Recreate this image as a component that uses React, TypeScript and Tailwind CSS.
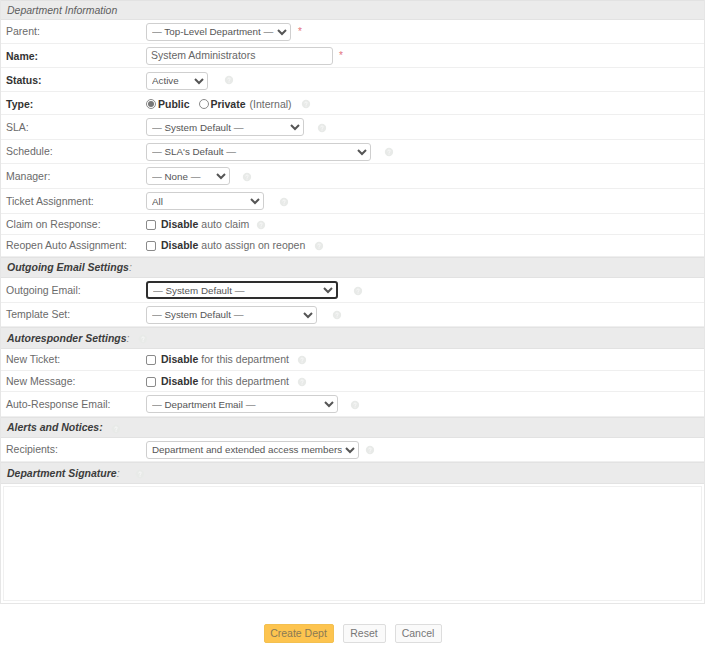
import { ReactNode } from "react";

function Help({ className = "" }: { className?: string }) {
  return (
    <svg
      viewBox="0 0 12 12"
      className={`w-[10px] h-[10px] shrink-0 mt-[1px] ${className}`}
      fill="none"
    >
      <circle cx="6" cy="6" r="5" fill="#e8eae8" />
      <path
        d="M4.6 4.8a1.4 1.4 0 1 1 2 1.3c-.4.2-.6.5-.6.9M6 8.6v.2"
        stroke="#fafafa"
        strokeWidth="1"
        strokeLinecap="round"
      />
    </svg>
  );
}

function Section({
  title,
  h,
  help,
  plain,
  bold,
}: {
  title: string;
  h: string;
  help?: string;
  plain?: boolean;
  bold?: string;
}) {
  return (
    <div
      className={`${h} flex items-center pl-[6px] pt-[1px] bg-[#ebebeb] border-y border-[#e2e2e2] text-[10.5px] italic text-[#3c3c3c] shrink-0`}
    >
      {plain ? (
        <span className="text-[#5e5e5e]">{title}</span>
      ) : (
        <span className="font-bold">
          {title}
          <span className="font-normal text-[#888888]">{bold}</span>
        </span>
      )}
      {help && <Help className={help} />}
    </div>
  );
}

function Row({
  label,
  strong,
  h,
  children,
}: {
  label: string;
  strong?: boolean;
  h: string;
  children: ReactNode;
}) {
  return (
    <div className={`${h} flex items-center border-b border-[#efefef] shrink-0`}>
      <div
        className={`w-[145px] pl-[5px] shrink-0 ${
          strong
            ? "pt-[3px] font-bold text-[#333333]"
            : "pt-[1px] text-[#6a6a6a]"
        }`}
      >
        {label}
      </div>
      {children}
    </div>
  );
}

function Select({
  value,
  width,
  focus,
}: {
  value: string;
  width: string;
  focus?: boolean;
}) {
  return (
    <select
      defaultValue={value}
      className={`${width} h-[18px] pl-[1px] text-[9.8px] text-[#555555] bg-white rounded-[3px] shrink-0 ${
        focus ? "border-2 border-[#2e2e2e]" : "border border-[#cfcfcf]"
      }`}
    >
      <option>{value}</option>
    </select>
  );
}

function Check({ bold, rest }: { bold: string; rest: string }) {
  return (
    <div className="flex items-center pt-[1px] text-[#6a6a6a]">
      <span className="w-[10px] h-[10px] rounded-[2px] border border-[#8a8a8a] bg-white mr-[5px] shrink-0" />
      <span className="font-bold text-[#333333]">{bold}</span>
      <span className="ml-[3px]">{rest}</span>
    </div>
  );
}

function Star({ className }: { className: string }) {
  return <span className={`text-[#e2727c] text-[10px] ${className}`}>*</span>;
}

export default function App() {
  return (
    <div
      className="w-[708px] h-[663px] bg-white text-[10.5px] overflow-hidden"
      style={{ fontFamily: '"Liberation Sans", Arial, sans-serif' }}
    >
      <div className="w-[705px] h-[604px] flex flex-col border-x border-b border-[#e6e6e6]">
        <Section title="Department Information" h="h-[20px]" plain />
        <Row label="Parent:" h="h-[24px]">
          <Select value="— Top-Level Department —" width="w-[145px]" />
          <Star className="ml-[7px]" />
        </Row>
        <Row label="Name:" strong h="h-[24px]">
          <div className="w-[187px] h-[18px] flex items-center pl-[4px] pt-[1px] border border-[#cfcfcf] rounded-[3px] text-[#666666] shrink-0">
            System Administrators
          </div>
          <Star className="ml-[6px]" />
        </Row>
        <Row label="Status:" strong h="h-[24px]">
          <Select value="Active" width="w-[62px] mt-[2px]" />
          <Help className="ml-[16px]" />
        </Row>
        <Row label="Type:" strong h="h-[23px]">
          <span className="w-[10px] h-[10px] mt-[1px] rounded-full border border-[#8a8a8a] flex items-center justify-center shrink-0">
            <span className="w-[6px] h-[6px] rounded-full bg-[#777777]" />
          </span>
          <span className="font-bold text-[#333333] ml-[2px] pt-[3px]">Public</span>
          <span className="w-[10px] h-[10px] mt-[1px] rounded-full border border-[#8a8a8a] ml-[9px] shrink-0" />
          <span className="font-bold text-[#333333] ml-[2px] pt-[3px]">Private</span>
          <span className="ml-[4px] pt-[3px] text-[#6a6a6a]">(Internal)</span>
          <Help className="ml-[9px]" />
        </Row>
        <Row label="SLA:" h="h-[25px]">
          <Select value="— System Default —" width="w-[158px]" />
          <Help className="ml-[13px]" />
        </Row>
        <Row label="Schedule:" h="h-[24px]">
          <Select value="— SLA's Default —" width="w-[225px]" />
          <Help className="ml-[13px]" />
        </Row>
        <Row label="Manager:" h="h-[25px]">
          <Select value="— None —" width="w-[84px]" />
          <Help className="ml-[12px]" />
        </Row>
        <Row label="Ticket Assignment:" h="h-[25px]">
          <Select value="All" width="w-[118px]" />
          <Help className="ml-[15px]" />
        </Row>
        <Row label="Claim on Response:" h="h-[21px]">
          <Check bold="Disable" rest="auto claim" />
          <Help className="ml-[7px]" />
        </Row>
        <Row label="Reopen Auto Assignment:" h="h-[22px]">
          <Check bold="Disable" rest="auto assign on reopen" />
          <Help className="ml-[9px]" />
        </Row>
        <Section title="Outgoing Email Settings" bold=":" h="h-[21px]" />
        <Row label="Outgoing Email:" h="h-[25px]">
          <Select value="— System Default —" width="w-[192px]" focus />
          <Help className="ml-[15px]" />
        </Row>
        <Row label="Template Set:" h="h-[24px]">
          <Select value="— System Default —" width="w-[171px]" />
          <Help className="ml-[15px]" />
        </Row>
        <Section
          title="Autoresponder Settings"
          bold=":"
          h="h-[22px]"
          help="ml-[8px]"
        />
        <Row label="New Ticket:" h="h-[22px]">
          <Check bold="Disable" rest="for this department" />
          <Help className="ml-[8px]" />
        </Row>
        <Row label="New Message:" h="h-[21px]">
          <Check bold="Disable" rest="for this department" />
          <Help className="ml-[8px]" />
        </Row>
        <Row label="Auto-Response Email:" h="h-[25px]">
          <Select value="— Department Email —" width="w-[192px]" />
          <Help className="ml-[12px]" />
        </Row>
        <Section title="Alerts and Notices:" h="h-[21px]" help="ml-[8px]" />
        <Row label="Recipients:" h="h-[24px]">
          <Select
            value="Department and extended access members"
            width="w-[213px]"
          />
          <Help className="ml-[6px]" />
        </Row>
        <Section title="Department Signature" bold=":" h="h-[22px]" help="ml-[15px]" />
        <div className="flex-1 p-[2px]">
          <div className="h-full border border-[#f0f0f0]" />
        </div>
      </div>
      <div className="flex justify-center gap-[9px] mt-[20px] pr-[3px]">
        <button className="w-[70px] h-[19px] rounded-[2px] bg-[#fdc44f] border border-[#f3c050] text-[#8a7a55]">
          Create Dept
        </button>
        <button className="w-[43px] h-[19px] rounded-[2px] bg-[#fafafa] border border-[#dddddd] text-[#777777]">
          Reset
        </button>
        <button className="w-[47px] h-[19px] rounded-[2px] bg-[#fafafa] border border-[#dddddd] text-[#777777]">
          Cancel
        </button>
      </div>
    </div>
  );
}
